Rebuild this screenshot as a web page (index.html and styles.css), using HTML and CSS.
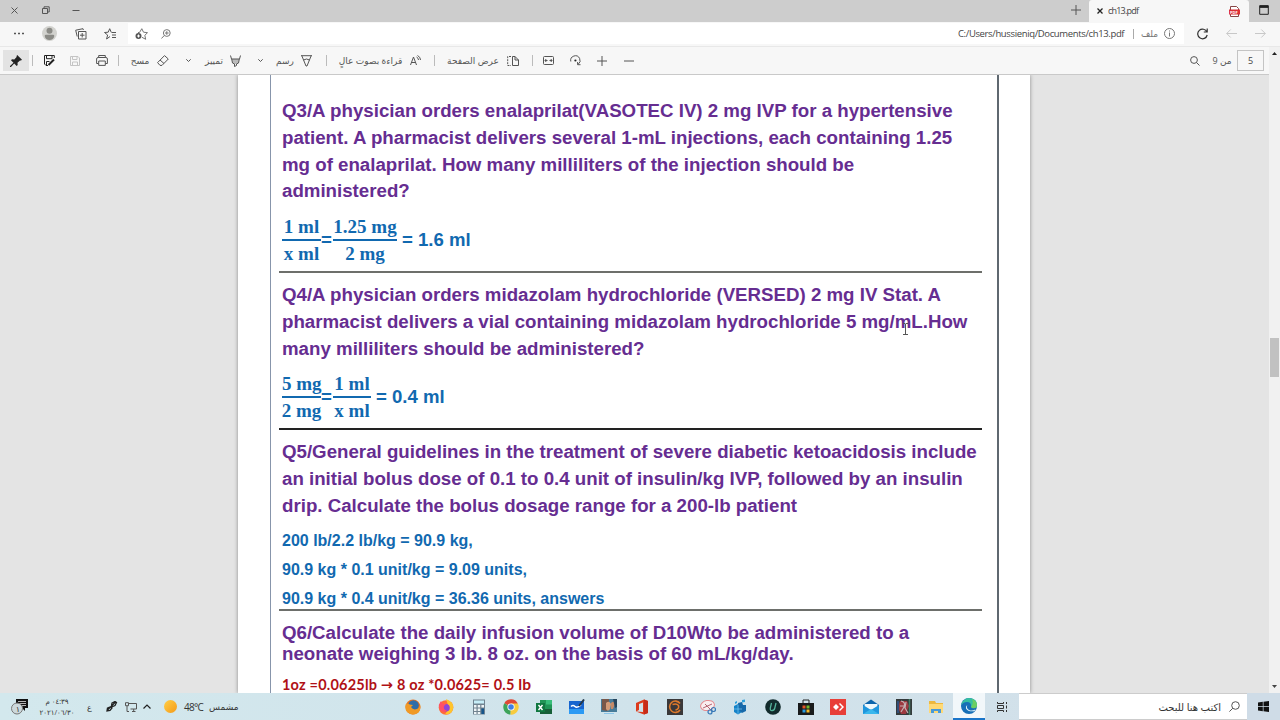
FILE: index.html
```html
<!DOCTYPE html>
<html lang="ar">
<head>
    <meta charset="UTF-8">
    <meta name="viewport" content="width=device-width, initial-scale=1.0">
    <title>ch13.pdf</title>
    <link rel="stylesheet" href="styles.css">
</head>
<body>
    <!-- Tab strip -->
    <header class="tabs">
        <svg class="close" width="7" height="7" viewBox="0 0 7 7"><path d="M.5.5l6 6M6.5.5l-6 6"/></svg>
        <svg class="restore" width="8" height="8" viewBox="0 0 8 8"><path d="M.5 2.5h5v5h-5zM2 2V.8h5.2V6H6"/></svg>
        <svg class="minimize" width="8" height="7" viewBox="0 0 8 7"><path d="M.5 3.5h7"/></svg>
        <svg class="new-tab" width="10" height="10" viewBox="0 0 10 10"><path d="M5 0v10M0 5h10"/></svg>
        <div class="tab">
            <svg width="6" height="6" viewBox="0 0 6 6"><path stroke-width="1.3" d="M.5.5l5 5M5.5.5l-5 5"/></svg>
            <span>ch13.pdf</span>
            <svg class="pdf" width="11" height="11" viewBox="0 0 11 11"><path class="sheet" d="M1.5.5h6l2 2v8h-8z"/><rect class="red" y="3.500" width="11" height="5"/><text x="1" y="7.600">PDF</text></svg>
        </div>
        <svg class="tab-menu" width="10" height="10" viewBox="0 0 10 10"><path d="M.7.7h8.600v8.600H.7z"/><path stroke-width="2.400" d="M.7 1.700h8.600"/></svg>
    </header>

    <!-- Address row -->
    <div class="address-row">
        <svg class="more" width="10" height="3" viewBox="0 0 10 3"><path stroke-width="1.500" d="M0 1.500h2M4 1.500h2M8 1.500h2"/></svg>
        <svg class="profile" width="15" height="15" viewBox="0 0 15 15"><circle class="disc" cx="7.500" cy="7.500" r="7.500"/><circle class="head" cx="7.500" cy="4.800" r="3"/><path class="head" d="M2.700 10q0-1.300 1.300-1.300h7q1.300 0 1.300 1.300c-.3 2.500-2.400 4-4.800 4s-4.500-1.500-4.800-4z"/></svg>
        <svg class="collections" width="12" height="12" viewBox="0 0 12 12"><path d="M3.500 3.500h7.500V11H3.500zM7.200 5v4.500M5 7.200h4.500M2.200 8.500L.7 2.200 8 .7l.4 1.300"/></svg>
        <svg class="favorites" width="12" height="12" viewBox="0 0 12 12"><path d="M6 8.500L2.600 11l1-4L.5 4.500l3.700-.3L5.700.7l1.500 3.500M7.500 4.500H12M8 7h4M8 9.500h4"/></svg>
        <div class="address">
            <svg class="add-fav" width="13" height="12" viewBox="0 0 13 12"><path d="M3 4.500h1.500L6.800.7 8.500 4.200l4 .5L9.800 7.300l.9 4-3.700-2"/><circle class="badge" cx="3.500" cy="8" r="3"/><path class="plus" d="M2 8h3M3.500 6.500v3"/></svg>
            <svg class="zoom-in" width="10" height="10" viewBox="0 0 10 10"><circle cx="5.800" cy="4" r="3.400"/><path d="M3.300 6.500L.4 9.500M4 4h3.600M5.800 2.200v3.600"/></svg>
            <span class="url">C:/Users/hussieniq/Documents/ch13.pdf</span>
            <i class="line"></i>
            <span class="file">ملف</span>
            <svg class="info" width="11" height="11" viewBox="0 0 11 11"><circle cx="5.500" cy="5.500" r="5"/><path d="M5.500 4.500v4M5.500 2.500v1"/></svg>
        </div>
        <svg class="reload" width="11" height="12" viewBox="0 0 11 12"><path stroke-width="1.200" d="M9.900 4A4.800 4.800 0 1 0 10.200 7M10.200.5V4H6.800"/></svg>
        <svg class="arrow" width="11" height="9" viewBox="0 0 11 9"><path d="M11 4.500H.7M4.700.5l-4 4 4 4"/></svg>
        <svg class="arrow forward" width="11" height="9" viewBox="0 0 11 9"><path d="M0 4.500h10.300M6.300.5l4 4-4 4"/></svg>
    </div>

    <!-- PDF toolbar -->
    <div class="toolbar">
        <div class="pin"><svg width="12" height="12" viewBox="0 0 12 12"><path class="fill" d="M7.200 0L12 4.800l-1 .7-1 0-2.500 2.300.2 2.200-1 1L4.200 8.500 1 12 0 12 0 11 3.500 7.800 1 5.300l1-1 2.300.2L6.600 2V1z"/></svg></div>
        <i class="sep sep-1"></i>
        <svg class="save-as" width="11" height="11" viewBox="0 0 11 11"><path d="M4 10.500H2L.5 9V.5h9.800V3M2.500.5v3.200h5.500V.5M2.500 10V6.500h3"/><path stroke-width="2" d="M4.500 10L10 4.500"/></svg>
        <svg class="save" width="10" height="10" viewBox="0 0 10 10"><path d="M.5.5h7.500l1.500 1.500v7.500H.5zM2.500.5v3H7v-3M2.500 9.500V6H7.500v3.500"/></svg>
        <svg class="print" width="12" height="11" viewBox="0 0 12 11"><path d="M2.700 2.500v-2h6.600v2M2.700 8.500H.6V4q0-1.500 1.500-1.500h7.800q1.500 0 1.500 1.500v4.500H9.300M2.700 6h6.600v4.400H2.700z"/></svg>
        <i class="sep sep-2"></i>
        <span class="label erase">مسح</span>
        <svg class="eraser" width="12" height="11" viewBox="0 0 12 11"><path d="M7.500.6L11.300 4 5 10.400H3L.6 7.600zM3 5l4 3.500"/></svg>
        <svg class="chevron chevron-1" width="5" height="3" viewBox="0 0 5 3"><path d="M.3.3l2.200 2.200L4.700.3"/></svg>
        <span class="label highlight">تمييز</span>
        <svg class="marker" width="11" height="12" viewBox="0 0 11 12"><path class="shade" d="M2 4h7l-.5 4-2 1h-2l-2-1z"/><path d="M.5.5L1.500 4h8l1-3.500M1.700 4l.8 4 2 1v2.500l2-1V9l2-1 .8-4"/></svg>
        <svg class="chevron chevron-2" width="5" height="3" viewBox="0 0 5 3"><path d="M.3.3l2.200 2.200L4.700.3"/></svg>
        <span class="label draw">رسم</span>
        <svg class="pen" width="11" height="12" viewBox="0 0 11 12"><path d="M0 .7h11M.8.7l4.200 10.300h1L10.200.7M2.500 5q3-2 6 0"/></svg>
        <i class="sep sep-3"></i>
        <span class="label read">قراءة بصوت عالٍ</span>
        <svg class="aloud" width="12" height="11" viewBox="0 0 12 11"><path d="M.5 10L3.500 2l3 8M1.500 7.500h4M6.500 2q2 1 2 3M7.500.5q3 1.500 3 4.500"/></svg>
        <i class="sep sep-4"></i>
        <span class="label view">عرض الصفحة</span>
        <svg class="pages" width="12" height="10" viewBox="0 0 12 10"><path d="M5.500.5H8l3.500 3.500v5.500h-6zM8 .5V4h3.500"/><path stroke-dasharray="2 1" d="M4 .5H.7v9H4"/></svg>
        <i class="sep sep-5"></i>
        <svg class="fit" width="11" height="9" viewBox="0 0 11 9"><path d="M.5 2V1.500q0-1 1-1h8q1 0 1 1v6q0 1-1 1h-8q-1 0-1-1zM2 4.500h2.500M6.500 4.500H9M3.200 3L2 4.500 3.200 6M7.800 3L9 4.500 7.800 6"/></svg>
        <svg class="rotate" width="11" height="11" viewBox="0 0 11 11"><path d="M.8 6.500A4.700 4.700 0 1 1 8 9.400M10.500 9.700H7.600V7"/><circle class="fill" cx="5.400" cy="5.500" r="1.100"/></svg>
        <svg class="bigger" width="10" height="10" viewBox="0 0 10 10"><path d="M5 0v10M0 5h10"/></svg>
        <svg class="smaller" width="10" height="10" viewBox="0 0 10 10"><path d="M0 5h10"/></svg>
        <svg class="find" width="10" height="10" viewBox="0 0 10 10"><circle cx="4" cy="4" r="3.400"/><path d="M6.500 6.500l3 3"/></svg>
        <span class="label of-pages" dir="rtl">من 9</span>
        <div class="page-number">5</div>
        <div class="scroll-up"><svg width="5" height="3" viewBox="0 0 5 3"><path class="fill" d="M0 3L2.500 0 5 3z"/></svg></div>
    </div>

    <!-- Document -->
    <main class="viewer">
        <div class="page">
            <div class="frame">
                <section class="q3">
                    <p>
                        <span>Q3/A physician orders enalaprilat(VASOTEC IV) 2 mg IVP for a hypertensive</span>
                        <span>patient. A pharmacist delivers several 1-mL injections, each containing 1.25</span>
                        <span>mg of enalaprilat. How many milliliters of the injection should be</span>
                        <span>administered?</span>
                    </p>
                    <div class="math">
                        <span class="frac f1"><b>1 ml</b><b>x ml</b></span><span class="eq">=</span><span class="frac f2"><b>1.25 mg</b><b>2 mg</b></span>
                        <span class="result">= 1.6 ml</span>
                    </div>
                </section>
                <section class="q4">
                    <p>
                        <span>Q4/A physician orders midazolam hydrochloride (VERSED) 2 mg IV Stat. A</span>
                        <span>pharmacist delivers a vial containing midazolam hydrochloride 5 mg/mL.How</span>
                        <span>many milliliters should be administered?</span>
                    </p>
                    <div class="math">
                        <span class="frac f1"><b>5 mg</b><b>2 mg</b></span><span class="eq">=</span><span class="frac f3"><b>1 ml</b><b>x ml</b></span>
                        <span class="result">= 0.4 ml</span>
                    </div>
                </section>
                <section class="q5">
                    <p>
                        <span>Q5/General guidelines in the treatment of severe diabetic ketoacidosis include</span>
                        <span>an initial bolus dose of 0.1 to 0.4 unit of insulin/kg IVP, followed by an insulin</span>
                        <span>drip. Calculate the bolus dosage range for a 200-lb patient</span>
                    </p>
                    <div class="steps">
                        <span>200 lb/2.2 lb/kg = 90.9 kg,</span>
                        <span>90.9 kg * 0.1 unit/kg = 9.09 units,</span>
                        <span>90.9 kg * 0.4 unit/kg = 36.36 units, answers</span>
                    </div>
                </section>
                <section class="q6">
                    <p>
                        <span>Q6/Calculate the daily infusion volume of D10Wto be administered to a</span>
                        <span>neonate weighing 3 lb. 8 oz. on the basis of 60 mL/kg/day.</span>
                    </p>
                    <div class="note">1oz =0.0625lb <span class="to">→</span> 8 oz *0.0625= 0.5 <big>lb</big></div>
                </section>
            </div>
        </div>
        <div class="scrollbar">
            <i class="thumb"></i>
            <svg width="5" height="3" viewBox="0 0 5 3"><path d="M0 0h5L2.500 3z"/></svg>
        </div>
        <svg class="cursor" width="5" height="12" viewBox="0 0 5 12"><path d="M0 .5h2l.5.5.5-.5h2M2.500 1v10M0 11.500h5"/></svg>
    </main>

    <!-- Taskbar -->
    <footer class="taskbar">
        <svg class="notify" width="18" height="17" viewBox="0 0 18 17"><path class="bubble" d="M5 1h12v9h-3v3l-3-3H5z"/><path class="rows" d="M7 3.500h8M7 5.500h8M7 7.500h8"/><circle cx="6" cy="10.500" r="5.500"/><text x="4.800" y="13.500">١</text></svg>
        <div class="clock"><span dir="rtl">٠٤:٣٩ م</span><span>٢٠٢١/٠٦/٣٠</span></div>
        <span class="lang">ع</span>
        <svg class="link" width="12" height="11" viewBox="0 0 12 11"><path stroke-width="1.300" d="M1 9.500L9.500 1M6 2l3-1.500 1.500 1L9 4.500 5.500 6zM1.500 7L5 5.500l1 1.500-2 2.500-3 .5z"/></svg>
        <svg class="network" width="12" height="10" viewBox="0 0 12 10"><path d="M3.500 1.500h8v5.500h-6M7 9.500h3.500M8.700 7v2.500M.5.700h3v3h-3zM2 4v5.500h2"/></svg>
        <svg class="up" width="8" height="5" viewBox="0 0 8 5"><path stroke-width="1.200" d="M.5 4.500L4 1l3.500 3.500"/></svg>
        <i class="sun"></i>
        <span class="temp">48°C</span>
        <span class="weather">مشمس</span>

        <div class="apps">
            <div><svg viewBox="0 0 16 16"><circle cx="8" cy="8" r="7.500" fill="#e9701c"/><circle cx="8.500" cy="6.500" r="5.300" fill="#2d6ca8"/><path d="M.8 5q2-1 4 .5L8 6 6 8q2 3.500 6 2 3-1.500 3-5 1.500 7-3 9.500-6 2.500-10-1.500Q-.5 9.500.8 5z" fill="#f09a26"/></svg></div>
            <div><svg viewBox="0 0 16 16"><circle cx="8" cy="8.500" r="7.300" fill="#ff6a3c"/><path d="M8 0q8 3 7.300 9Q14 16 7 15.500L11 9z" fill="#ffc52d"/><circle cx="8" cy="8.700" r="3.800" fill="#8e45d8"/><path d="M.8 6L3 2l1.500 2.500L8 5 6 7q-1 4 3 4.500-4 3-7-1z" fill="#ff5068"/></svg></div>
            <div><svg viewBox="0 0 16 16"><path d="M2 .5h12v15H2z" fill="#718390"/><path d="M3 1.500h10v3H3z" fill="#c7eef8"/><path d="M3 6h2.500v2.500H3zM6.700 6h2.500v2.500H6.700zM10.400 6H13v2.500h-2.600zM3 9.500h2.500V12H3zM6.700 9.500h2.500V12H6.700zM3 13h2.500v2H3zM6.700 13h2.500v2H6.700z" fill="#eef4f6"/><path d="M10.400 9.500H13V15h-2.600z" fill="#15558b"/></svg></div>
            <div><svg viewBox="0 0 16 16"><path d="M8 8L1.300 4.200A7.600 7.600 0 0 1 14.800 4.500z" fill="#df4937"/><path d="M8 8h0L1.300 4.200A7.600 7.600 0 0 0 7.500 15.600z" fill="#3da45a"/><path d="M8 4.500h6.800A7.600 7.600 0 0 1 7.500 15.600z" fill="#f7cb3e"/><circle cx="8" cy="8" r="3.600" fill="#fff"/><circle cx="8" cy="8" r="2.800" fill="#407fe5"/></svg></div>
            <div><svg viewBox="0 0 16 16"><path d="M4 1h12v14H4z" fill="#209455"/><path d="M10 1h6v4.500h-6z" fill="#37bd79"/><path d="M4 10h12v5H4z" fill="#175f38"/><path d="M0 4h9v9H0z" fill="#107740"/><path d="M2.500 6L6.500 11M6.500 6l-4 5" stroke="#fff" stroke-width="1.400"/></svg></div>
            <div><svg viewBox="0 0 16 16"><path d="M0 2h15v13H0z" fill="#1765cf"/><path d="M0 10h15v5H0z" fill="#2c9af4"/><path d="M2 7.500q2-2 4 0t6-1.500" fill="none" stroke="#fff" stroke-width="1.500"/><path d="M10 7l5-6.500" stroke="#25384b" stroke-width="2"/></svg></div>
            <div><svg viewBox="0 0 16 16"><path d="M0 0h16v13H0z" fill="#477b99"/><path d="M1 0h7v9L6 12 1 11z" fill="#795749"/><path d="M5 4q3-3 5 1l-1 5q-2 3-4 0z" fill="#d39b78"/><path d="M10 4q3-3 4 1l-2 5h-2z" fill="#c48a68"/><path d="M12 0h4v8l-2 1z" fill="#27455c"/><path d="M3 14.500h10" stroke="#8ac4e8"/></svg></div>
            <div><svg viewBox="0 0 16 16"><path d="M2 4l8-3.500 4 1.500v12l-4 1.500L2 12.500l7 .5V3.500L5 5v6l-3 1.500z" fill="#dc3b1c"/><path d="M10 .5l4 1.500v12l-4 1.500z" fill="#c72b18"/></svg></div>
            <div><svg viewBox="0 0 16 16"><path d="M0 0h16v16H0z" fill="#3a3839"/><path d="M13 4.500A5.700 5.700 0 1 0 13 11M5.500 5.500q4-1.500 6 1 1 3.500-3 4.500" fill="none" stroke="#df7a2c" stroke-width="1.600"/></svg></div>
            <div><svg viewBox="0 0 16 16"><ellipse cx="7.500" cy="6.500" rx="7" ry="5" fill="#f9eef0" stroke="#e58c91" transform="rotate(-12 7.500 6.500)"/><path d="M3 9l9-4M5 5l7 7" stroke="#b36473"/><circle cx="10" cy="13" r="2" fill="none" stroke="#3678b8" stroke-width="1.200"/><circle cx="13.500" cy="10.500" r="2" fill="none" stroke="#3678b8" stroke-width="1.200"/></svg></div>
            <div><svg viewBox="0 0 16 16"><path d="M2 7l4-2 4 2v6l-4 2.500L2 13z" fill="#1483c9"/><path d="M6 4l4-1 1 3 3 0v6l-4 2-3-3z" fill="#1769a9"/><path d="M10 1l3-.5V3l-3 .5zM3 3l2-1v2L3 5z" fill="#2da1dc"/><path d="M2 10h8M6 6v9" stroke="#78c4ed" stroke-width=".7"/></svg></div>
            <div><svg viewBox="0 0 16 16"><circle cx="8" cy="8" r="7.800" fill="#122b2c"/><path d="M6.500 4L5.300 9q-.3 3 2 2.500 2 0 2.500-2.500L11 4" fill="none" stroke="#54b39b" stroke-width="1.300"/></svg></div>
            <div><svg viewBox="0 0 16 16"><path d="M5 4V1h6v3" fill="none" stroke="#222"/><path d="M0 4h16v12H0z" fill="#181a1b"/><path d="M4.500 6.500h3v3h-3z" fill="#e55327"/><path d="M8.500 6.500h3v3h-3z" fill="#76b82c"/><path d="M4.500 10.500h3v3h-3z" fill="#299be0"/><path d="M8.500 10.500h3v3h-3z" fill="#f1b92c"/></svg></div>
            <div><svg viewBox="0 0 16 16"><path d="M0 0h16v16H0z" fill="#e83f38"/><path d="M6 5L9 8l-3 3-3-3zM9 5l1-1 4 4-4 4-1-1 3-3z" fill="#fff"/></svg></div>
            <div><svg viewBox="0 0 16 16"><path d="M0 6l8-5.500L16 6v9H0z" fill="#0c65ad"/><path d="M1.500 5h13v6h-13z" fill="#eef8fd"/><path d="M0 6l8 5 8-5v9H0z" fill="#1f96dd"/><path d="M0 15l8-5 8 5z" fill="#39b7ed"/></svg></div>
            <div><svg viewBox="0 0 16 16"><path d="M0 0h16v16H0z" fill="#343a3b"/><path d="M4 2h7l2 5-3 8H5L2 9z" fill="#9c3940"/><path d="M5 2q5 1 3 6l-3 5M10 3l-1 6 3 5M4 7h5" fill="none" stroke="#c3b1b4" stroke-width="1.200"/><path d="M13.500 0v16" stroke="#438069" stroke-width="1.500"/><path d="M2 2v12" stroke="#314d77" stroke-width="2"/></svg></div>
            <div><svg viewBox="0 0 16 16"><path d="M1 2h6l1 2h7v10H1z" fill="#edb83e"/><path d="M1 5h14v9H1z" fill="#ffd974"/><path d="M3 10h10v4h-3v-2H6v2H3z" fill="#4999d6"/></svg></div>
            <div class="active"><svg viewBox="0 0 16 16"><circle cx="8" cy="8" r="8" fill="#176fb7"/><path d="M.5 5.500Q3 0 8.500 0 16 .5 16 7q-.5 3-4 3-2.500-.5-2-2.500Q10 4 6 4 2 4 .5 7z" fill="#35bfa0"/><path d="M11 1q5 2 5 6t-5 3l-1-1q3-4 1-8z" fill="#6cce63"/><path d="M6.300 7q-1.500 3 1.700 5 3 1.300 6.300-.5l-.8 1.700Q7 14 5 10.500 4.300 8 6.300 7z" fill="#e6f5fc"/></svg></div>
            <div><svg viewBox="0 0 16 16"><path d="M3.500 3v1.500h6V3M3.500 13v-1.500h6V13M3.500 6.500h6v3h-6zM12.500 3v2M12.500 6.500v3M12.500 11v2" fill="none" stroke="#333"/></svg></div>
        </div>

        <div class="search">
            <span>اكتب هنا للبحث</span>
            <svg width="11" height="11" viewBox="0 0 11 11"><circle cx="6.500" cy="4.500" r="3.800"/><path d="M3.800 7.200L.4 10.600"/></svg>
        </div>
        <div class="start"><svg width="11" height="11" viewBox="0 0 11 11"><path d="M0 1.500L4.800.8v4.400H0zM5.500.7L11 0v5.200H5.500zM0 5.900h4.800v4.300L0 9.500zM5.500 5.900H11V11l-5.500-.7z"/></svg></div>
    </footer>
</body>
</html>
```
FILE: styles.css
```css
* {
    box-sizing: border-box;
}

body {
    margin: 0;
    width: 1280px;
    height: 720px;
    overflow: hidden;
    display: flex;
    flex-direction: column;
    background: #e4e4e4;
    font-family: "Open Sans", "DejaVu Sans", sans-serif;
    color: #444;
}

svg {
    display: block;
    flex: none;
    fill: none;
    stroke: #555;
}

i {
    flex: none;
}

/* Tab strip */
.tabs {
    height: 22px;
    flex: none;
    display: flex;
    align-items: center;
    padding-bottom: 2px;
    background: #cdcdcd;
}

.close { margin-left: 11px; }
.restore { margin-left: 24px; }
.minimize { margin-left: 22px; }
.new-tab { margin-left: 991px; }

.tab {
    display: flex;
    align-items: center;
    width: 160px;
    height: 22px;
    margin: 2px 0 0 8px;
    padding-left: 8px;
    background: #f7f7f7;
    border-radius: 3px 3px 0 0;
    font-size: 9px;
}

.tab svg { stroke: #222; }

.tab span {
    width: 121px;
    margin-left: 5px;
    padding-bottom: 1px;
    letter-spacing: -0.8px;
}

.pdf .sheet { fill: #fff; stroke: #844; }
.pdf .red { fill: #dc2f35; stroke: none; }
.pdf text { fill: #fff; stroke: none; font-size: 4px; font-weight: bold; }
.tab-menu { margin-left: 10px; }
.tab-menu path { stroke: #222; }

/* Address row */
.address-row {
    height: 25px;
    flex: none;
    display: flex;
    align-items: center;
    padding-bottom: 1px;
    background: #f7f7f7;
    border-bottom: 1px solid #e8e8e8;
}

.more { margin-left: 14px; }
.profile { margin-left: 18px; stroke: none; }
.profile .disc { fill: #d2d2ce; }
.profile .head { fill: #8b8b86; }
.collections { margin-left: 18px; }
.favorites { margin-left: 17px; }

.address {
    display: flex;
    align-items: center;
    width: 1056px;
    height: 21px;
    margin-left: 12px;
    padding-left: 7px;
    background: #fff;
}

.address svg { stroke: #777; }
.add-fav .badge { fill: #555; stroke: none; }
.add-fav .plus { stroke: #fff; }
.zoom-in { margin-left: 13px; }

.url {
    width: 167px;
    margin-left: 787px;
    font-size: 9.5px;
    letter-spacing: -0.36px;
    white-space: nowrap;
}

.line {
    width: 1px;
    height: 10px;
    margin-left: 8px;
    background: #aaa;
}

.file {
    width: 18px;
    margin-left: 7px;
    font-size: 9px;
    color: #777;
}

.info { margin-left: 5px; }
.reload { margin-left: 13px; }
.reload path { stroke: #333; }
.arrow { margin-left: 18px; }
.arrow path { stroke: #c8c8c8; }

/* PDF toolbar */
.toolbar {
    height: 28px;
    flex: none;
    display: flex;
    align-items: center;
    background: #f7f7f7;
    border-bottom: 1px solid #c9c9c9;
}

.toolbar .fill { fill: #222; stroke: none; }

.pin {
    display: flex;
    align-items: center;
    justify-content: center;
    width: 26px;
    height: 21px;
    margin-left: 3px;
    background: #e3e3e3;
}

.sep {
    width: 1px;
    height: 11px;
    background: #bbb;
}

.label {
    font-size: 9px;
    line-height: 14px;
    color: #555;
    white-space: nowrap;
    display: flex;
    justify-content: center;
}

.sep-1 { margin-left: 3px; }
.save-as { margin-left: 11px; stroke: #222; }
.save { margin-left: 15px; }
.save path { stroke: #c4c4c4; }
.print { margin-left: 16px; }
.sep-2 { margin-left: 10px; }
.erase { width: 20px; margin-left: 11px; }
.eraser { margin-left: 7px; }
.chevron-1 { margin-left: 17px; }
.highlight { width: 20px; margin-left: 13px; }
.marker { margin-left: 6px; }
.marker .shade { fill: #bbb; stroke: none; }
.chevron-2 { margin-left: 17px; }
.draw { width: 18px; margin-left: 13px; }
.pen { margin-left: 7px; }
.sep-3 { margin-left: 14px; }
.read { width: 63px; margin-left: 12px; }
.aloud { margin-left: 8px; }
.sep-4 { margin-left: 12px; }
.view { width: 54px; margin-left: 11px; }
.pages { margin-left: 7px; }
.sep-5 { margin-left: 13px; }
.fit { margin-left: 10px; }
.rotate { margin-left: 16px; }
.bigger { margin-left: 16px; }
.smaller { margin-left: 17px; }
.find { margin-left: 556px; }
.of-pages { width: 20px; margin-left: 12px; }

.page-number {
    width: 27px;
    height: 21px;
    margin-left: 5px;
    border: 1px solid #c4c4c4;
    font-size: 9px;
    line-height: 20px;
    text-align: center;
}

.scroll-up {
    display: flex;
    justify-content: center;
    width: 11px;
    height: 28px;
    margin: 1px 0 0 auto;
    padding-top: 5px;
    background: #f1f1f1;
}

/* Document */
.viewer {
    position: relative;
    display: flex;
    height: 618px;
    flex: none;
    padding-left: 238px;
    background: #e4e4e4;
    overflow: hidden;
}

.page {
    width: 792px;
    flex: none;
    padding-left: 32px;
    background: #fff;
    box-shadow: 0 0 4px rgba(0, 0, 0, 0.4);
}

.frame {
    width: 729px;
    height: 100%;
    padding: 23px 0 0 9px;
    border-left: 1px solid #8795ab;
    border-right: 2px solid #5f6870;
    font-family: "Liberation Sans", Arial, sans-serif;
    font-weight: bold;
    color: #662d91;
}

section {
    width: 703px;
    margin-left: -1px;
    padding-left: 3px;
    border-bottom: 2px solid #6d6f6b;
}

section p {
    margin: 0;
    font-size: 18.7px;
    line-height: 26.8px;
}

section p span,
.steps span {
    display: block;
    white-space: nowrap;
}

.q3 { height: 175px; }
.q4 { height: 157px; padding-top: 9px; border-color: #222; }
.q5 { height: 181px; padding-top: 9px; }
.q6 { padding-top: 11px; border: 0; }
.q6 p { line-height: 21px; }

.math {
    display: flex;
    align-items: center;
    height: 52px;
    margin-top: 9px;
    color: #1169b0;
    font-size: 18.6px;
    white-space: nowrap;
}

.frac {
    display: flex;
    flex-direction: column;
    align-items: center;
    font-family: "Liberation Serif", serif;
    font-size: 19px;
    line-height: 25px;
}

.frac b:first-child {
    width: 100%;
    text-align: center;
    border-bottom: 2px solid #1169b0;
}

.f1 { width: 39px; }
.f2 { width: 64px; }
.f3 { width: 38px; }
.eq { width: 12px; }
.result { margin-left: 5px; }

.steps {
    margin-top: 7px;
    font-size: 16px;
    line-height: 29px;
    color: #1169b0;
}

.note {
    margin-top: 12px;
    font-family: Lato, sans-serif;
    font-size: 14.5px;
    line-height: 17px;
    letter-spacing: 0.2px;
    color: #b01116;
    white-space: nowrap;
}

.note .to { font-family: "DejaVu Sans", sans-serif; line-height: 1; }
.note big { font-size: 15.5px; line-height: 1; }

.scrollbar {
    display: flex;
    flex-direction: column;
    align-items: center;
    justify-content: space-between;
    width: 11px;
    margin-left: 239px;
    padding: 263px 0 5px;
    background: #f1f1f1;
}

.scrollbar svg { fill: #444; stroke: none; }

.thumb {
    width: 9px;
    height: 39px;
    background: #c1c1c1;
}

.cursor {
    position: absolute;
    left: 903px;
    top: 248px;
}

/* Taskbar */
.taskbar {
    height: 27px;
    flex: none;
    display: flex;
    align-items: center;
    background: linear-gradient(90deg, #d3e8ed, #d0e3eb 50%, #d3dfe9);
    color: #333;
    white-space: nowrap;
}

.notify { margin-left: 11px; }
.notify .bubble { fill: #111; stroke: none; }
.notify .rows { stroke: #ddd; stroke-width: 0.8; }
.notify circle { fill: #ccd8db; stroke: #777; }
.notify text { fill: #333; stroke: none; font-size: 8px; }

.clock {
    display: flex;
    flex-direction: column;
    align-items: center;
    width: 36px;
    margin-left: 10px;
    font-size: 7px;
    line-height: 11px;
}

.lang { width: 8px; margin-left: 12px; font-size: 8px; }
.link { margin-left: 11px; stroke: #222; }
.network { margin-left: 7px; }
.up { margin-left: 6px; stroke: #222; }

.sun {
    width: 13px;
    height: 13px;
    margin-left: 13px;
    border-radius: 50%;
    background: linear-gradient(135deg, #ffcf47, #f59a17);
}

.temp { width: 20px; margin-left: 7px; font-size: 10px; letter-spacing: -0.7px; }
.weather { width: 29px; margin-left: 5px; font-size: 9px; }

.apps {
    display: flex;
    width: 621px;
    height: 27px;
    margin-left: 159px;
}

.apps div {
    flex: 1;
    display: flex;
    align-items: center;
    justify-content: center;
}

.apps svg {
    width: 16px;
    height: 16px;
    stroke: none;
}

.apps .active {
    background: #f2f7fa;
    border-bottom: 2px solid #1b75c9;
}

.search {
    display: flex;
    align-items: center;
    justify-content: flex-end;
    width: 228px;
    height: 27px;
    margin-left: 1px;
    padding-right: 7px;
    background: #fff;
    border-top: 1px solid #ccc;
    border-bottom: 1px solid #ccc;
    font-size: 10px;
}

.search svg { margin-left: 8px; }

.start {
    flex: 1;
    display: flex;
    align-items: center;
    justify-content: center;
    height: 27px;
    background: #cfdce7;
}

.start svg { fill: #111; stroke: none; }
```
